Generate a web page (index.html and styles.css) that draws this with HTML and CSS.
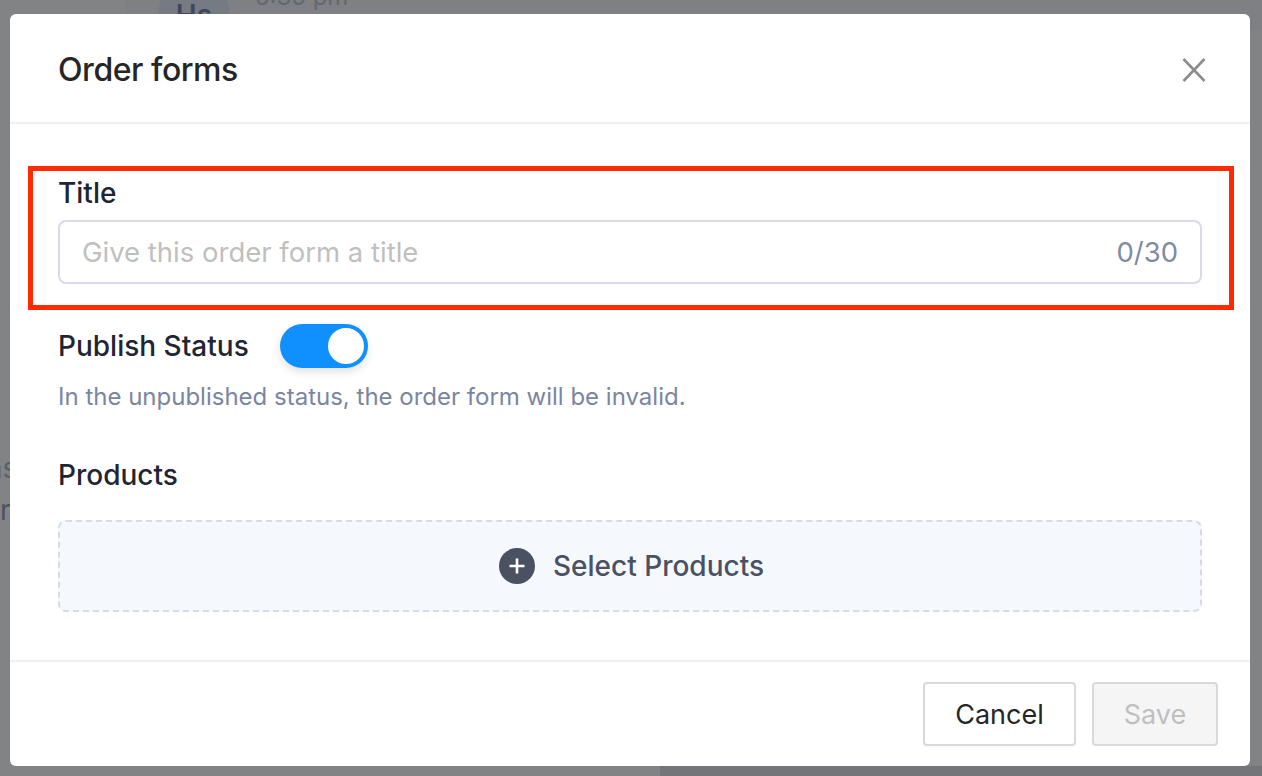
FILE: index.html
```html
<!DOCTYPE html>
<html lang="en">
<head>
<meta charset="utf-8">
<title>Order forms</title>
<link rel="stylesheet" href="styles.css">
</head>
<body>
<div class="behind" aria-hidden="true">
  <div class="shade"></div>
  <div class="avatar">Hs</div>
  <div class="time">5:35 pm</div>
  <div class="side-a">ns</div>
  <div class="side-b">r</div>
  <div class="strip"></div>
</div>
<div class="modal">
  <header class="modal-head">
    <h1 class="modal-title">Order forms</h1>
    <svg class="close" viewBox="0 0 24 24" width="24" height="24" fill="none" stroke="#8c8c8c" stroke-width="2.6"><path d="M1.5 1 L22.5 23 M22.5 1 L1.5 23"/></svg>
  </header>
  <div class="modal-body">
    <section class="title-field">
      <label class="label">Title</label>
      <div class="input">
        <span class="placeholder">Give this order form a title</span>
        <span class="count">0/30</span>
      </div>
    </section>
    <section class="status">
      <div class="status-row">
        <span class="label">Publish Status</span>
        <span class="toggle"><span class="knob"></span></span>
      </div>
      <p class="hint">In the unpublished status, the order form will be invalid.</p>
    </section>
    <section class="products">
      <div class="label">Products</div>
      <div class="picker">
        <svg class="plus" viewBox="0 0 36 36" width="36" height="36"><circle cx="18" cy="18" r="18" fill="#4a5163"/><path d="M18 10.5 V25.5 M10.5 18 H25.5" stroke="#fff" stroke-width="2.6"/></svg>
        <span class="picker-text">Select Products</span>
      </div>
    </section>
  </div>
  <footer class="modal-foot">
    <button class="btn">Cancel</button>
    <button class="btn btn-off">Save</button>
  </footer>
</div>
</body>
</html>
```
FILE: styles.css
```css
* { box-sizing: border-box; }
html, body { margin: 0; height: 776px; overflow: hidden; }
body {
  background: #828385;
  font-family: Inter, "Liberation Sans", sans-serif;
  padding: 14px 12px 10px 10px;
  position: relative;
}
.behind { position: absolute; inset: 0; overflow: hidden; }
.shade { position: absolute; left: 126px; top: 0; right: 0; height: 30px; background: #7f8083; }
.avatar {
  position: absolute; left: 158px; top: -21px; width: 72px; height: 72px;
  border-radius: 50%; background: #767b83; color: #41475a;
  font-size: 28px; font-weight: 600; line-height: 72px; text-align: center;
}
.time { position: absolute; left: 255px; top: -15px; font-size: 24px; color: #62676f; line-height: 24px; }
.side-a { position: absolute; left: -14px; top: 454px; font-size: 28px; line-height: 28px; color: #5a5f6c; }
.side-b { position: absolute; left: 0; top: 496px; font-size: 28px; line-height: 28px; color: #4d5262; }
.strip { position: absolute; left: 660px; right: 0; top: 766px; height: 10px; background: #747578; }
.modal {
  position: relative;
  width: 1240px; height: 752px;
  background: #fff; border-radius: 6px;
  display: flex; flex-direction: column;
}
.modal-head {
  height: 110px; flex: none;
  border-bottom: 2px solid #f0f0f0;
  display: flex; align-items: center; justify-content: space-between;
  padding: 0 44px 0 48px;
}
.modal-title { margin: 0; font-size: 32px; font-weight: 500; letter-spacing: -0.45px; color: #262626; line-height: 40px; position: relative; top: 2px; }
.close { display: block; position: relative; top: 2px; }
.modal-body { flex: 1; padding: 42px 48px 0; display: flex; flex-direction: column; }
.label { display: block; font-size: 28px; font-weight: 500; color: #1f2533; line-height: 36px; }
.title-field {
  margin: 0 -32px 0 -30px;
  height: 144px;
  border: 5px solid #ff2a00;
  padding: 4px 27px 0 25px;
}
.input {
  margin-top: 9px; height: 64px;
  border: 2px solid #d7dbe8; border-radius: 8px;
  padding: 0 22px;
  display: flex; align-items: center; justify-content: space-between;
  font-size: 27.5px;
}
.placeholder { color: #bfbfbf; }
.count { color: #7f8aa3; }
.status { margin-top: 14px; }
.status-row { display: flex; align-items: center; gap: 31px; height: 44px; }
.toggle {
  width: 88px; height: 44px; border-radius: 22px; background: #1090ff;
  display: flex; justify-content: flex-end; align-items: center; padding: 4px;
  box-shadow: 0 4px 8px rgba(0,0,0,.12);
}
.knob { width: 36px; height: 36px; border-radius: 50%; background: #fff; }
.hint { margin: 13px 0 0; font-size: 24px; line-height: 32px; color: #7a86a0; }
.products { margin-top: 44px; }
.picker {
  margin-top: 27px; height: 92px; padding-left: 3px;
  border: 2px dashed #d7dbe8; border-radius: 8px; background: #f5f8fd;
  display: flex; align-items: center; justify-content: center; gap: 18px;
}
.picker-text { font-size: 28px; font-weight: 500; color: #4a5163; }
.modal-foot {
  height: 106px; flex: none;
  border-top: 2px solid #f0f0f0;
  display: flex; justify-content: flex-end; align-items: flex-start; gap: 16px;
  padding: 20px 32px 0 0;
}
.btn {
  height: 64px; width: 153px;
  border: 2px solid #d9d9d9; border-radius: 4px; background: #fff;
  font: 400 27px Inter, "Liberation Sans", sans-serif; color: #262626;
  box-shadow: 0 2px 0 rgba(0,0,0,.015);
  padding: 0;
}
.btn-off { width: 126px; background: #f5f5f5; color: #bfbfbf; box-shadow: none; }
```
